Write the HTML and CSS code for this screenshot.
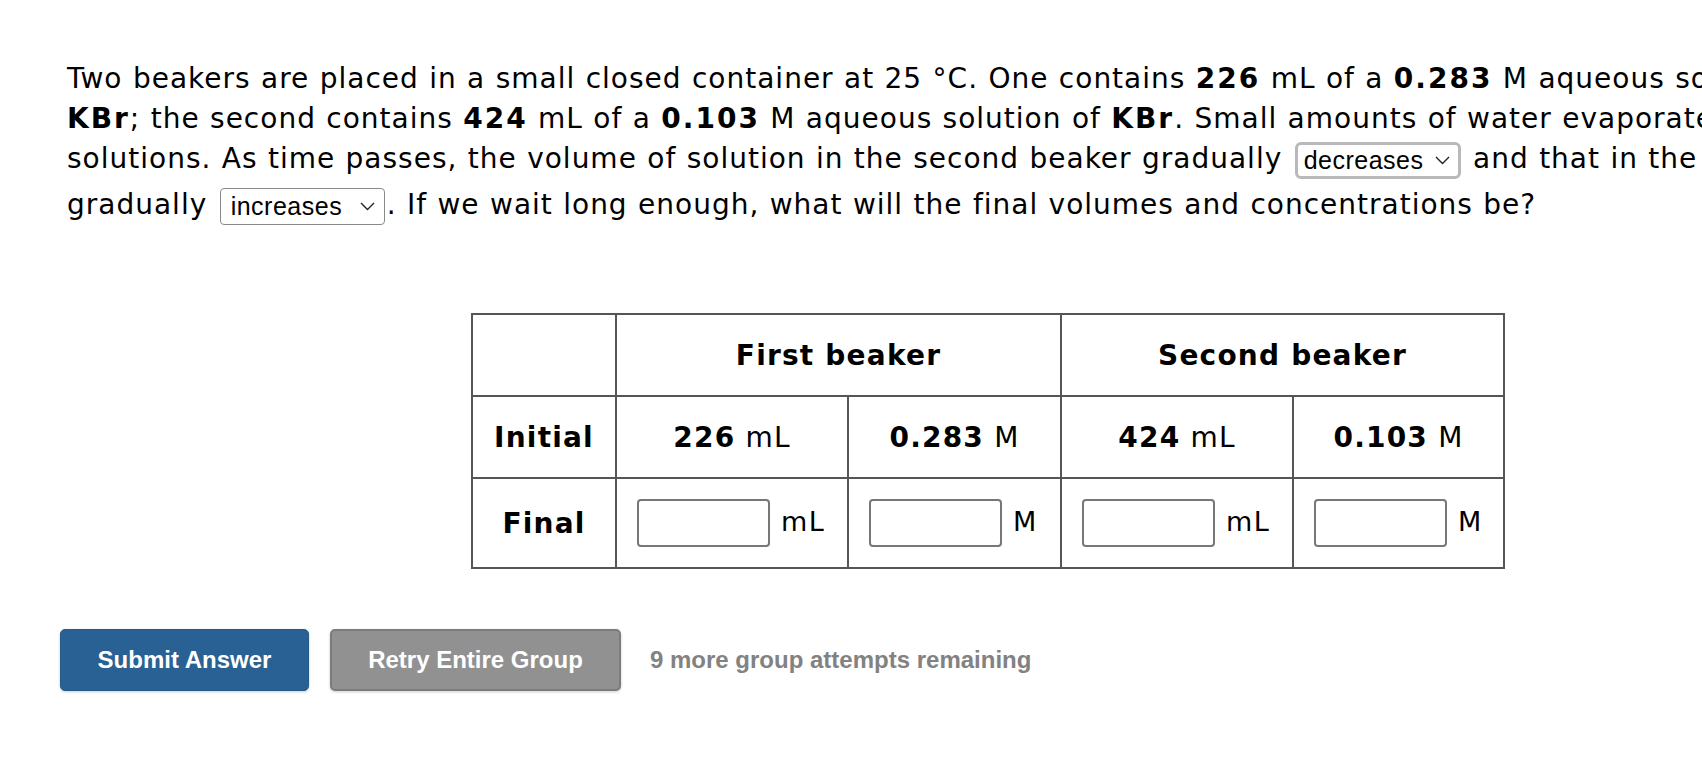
FILE: index.html
```html
<!DOCTYPE html>
<html lang="en">
<head>
<meta charset="utf-8">
<title>Two beakers</title>
<link rel="stylesheet" href="styles.css">
</head>
<body>
<div class="page">
  <p class="question">
    <span class="line">Two beakers are placed in a small closed container at 25 °C. One contains <b>226</b> mL of a <b>0.283</b> M aqueous solution of</span>
    <span class="line"><b>KBr</b>; the second contains <b>424</b> mL of a <b>0.103</b> M aqueous solution of <b>KBr</b>. Small amounts of water evaporate from both</span>
    <span class="line">solutions. As time passes, the volume of solution in the second beaker gradually <span class="select select-answered">decreases<svg class="chev" viewBox="0 0 15 9" width="15" height="9"><path d="M1 1 L7.5 7.5 L14 1" fill="none" stroke="#222" stroke-width="1.4"/></svg></span> and that in the first beaker</span>
    <span class="line line-last">gradually <span class="select">increases<svg class="chev" viewBox="0 0 15 9" width="15" height="9"><path d="M1 1 L7.5 7.5 L14 1" fill="none" stroke="#222" stroke-width="1.4"/></svg></span>. If we wait long enough, what will the final volumes and concentrations be?</span>
  </p>

  <table class="grid">
    <colgroup>
      <col class="c0"><col class="c1"><col class="c2"><col class="c3"><col class="c4">
    </colgroup>
    <tr class="r0">
      <th></th>
      <th colspan="2">First beaker</th>
      <th colspan="2">Second beaker</th>
    </tr>
    <tr class="r1">
      <th>Initial</th>
      <td><b>226</b> mL</td>
      <td><b>0.283</b> M</td>
      <td><b>424</b> mL</td>
      <td><b>0.103</b> M</td>
    </tr>
    <tr class="r2">
      <th>Final</th>
      <td><span class="entry"><span class="box"></span><span class="unit">mL</span></span></td>
      <td><span class="entry"><span class="box"></span><span class="unit">M</span></span></td>
      <td><span class="entry"><span class="box"></span><span class="unit">mL</span></span></td>
      <td><span class="entry"><span class="box"></span><span class="unit">M</span></span></td>
    </tr>
  </table>

  <div class="actions">
    <button class="btn btn-submit">Submit Answer</button>
    <button class="btn btn-retry">Retry Entire Group</button>
    <span class="remaining">9 more group attempts remaining</span>
  </div>
</div>
</body>
</html>
```

FILE: styles.css
```css
html, body {
  margin: 0;
  padding: 0;
  background: #fff;
  overflow: hidden;
}
.page {
  width: 1702px;
  height: 770px;
  overflow: hidden;
  font-family: "DejaVu Sans", Verdana, sans-serif;
  color: #000;
}
.question {
  margin: 0;
  padding: 59px 0 0 67px;
  font-size: 28px;
  letter-spacing: 1px;
  word-spacing: 0.5px;
  line-height: 40px;
  white-space: nowrap;
}
.question b {
  letter-spacing: 2px;
}
.line {
  display: block;
}
.line-last {
  margin-top: 6px;
}
.select {
  display: inline-block;
  box-sizing: border-box;
  height: 37px;
  line-height: 34px;
  width: 165px;
  padding: 0 0 0 10px;
  border: 1px solid #8a8a8a;
  border-radius: 4px;
  font-family: "Liberation Sans", Arial, sans-serif;
  font-size: 25px;
  letter-spacing: 0.5px;
  word-spacing: 0;
  vertical-align: middle;
  position: relative;
  margin: 0 2px;
}
.select-answered {
  width: 166px;
  border: 3px solid #b9b9b9;
  border-radius: 6px;
  padding-left: 6px;
  line-height: 31px;
}
.chev {
  position: absolute;
  right: 9px;
  top: 13px;
}
.select-answered .chev {
  right: 8px;
  top: 11px;
}
.grid {
  margin: 88px 0 0 471px;
  border-collapse: collapse;
  border: 2px solid #555;
  font-size: 28px;
  letter-spacing: 1.2px;
}
.grid th, .grid td {
  border: 2px solid #555;
  text-align: center;
  padding: 0;
}
.grid th { font-weight: bold; }
.c0 { width: 144px; }
.c1 { width: 232px; }
.c2 { width: 213px; }
.c3 { width: 232px; }
.c4 { width: 211px; }
.r0, .r1 { height: 82px; }
.r2 { height: 90px; }
.entry {
  display: flex;
  align-items: center;
  gap: 11px;
  padding-left: 20px;
}
.box {
  display: block;
  width: 133px;
  height: 48px;
  box-sizing: border-box;
  border: 2px solid #777;
  border-radius: 4px;
  background: #fff;
}
.unit {
  font-size: 27px;
  letter-spacing: 1.5px;
  padding-bottom: 4px;
}
.actions {
  display: flex;
  align-items: center;
  margin: 60px 0 0 60px;
  gap: 21px;
  font-family: "Liberation Sans", Arial, sans-serif;
}
.btn {
  height: 62px;
  border-radius: 5px;
  font-family: "Liberation Sans", Arial, sans-serif;
  font-weight: bold;
  font-size: 24px;
  color: #fff;
  padding: 0;
  box-shadow: 0 1px 3px rgba(0,0,0,0.2);
}
.btn-submit {
  width: 249px;
  background: #2a6194;
  border: 1px solid #255a89;
}
.btn-retry {
  width: 291px;
  background: #919191;
  border: 2px solid #7c7c7c;
}
.remaining {
  margin-left: 8px;
  font-weight: bold;
  font-size: 24px;
  color: #828282;
}
```
